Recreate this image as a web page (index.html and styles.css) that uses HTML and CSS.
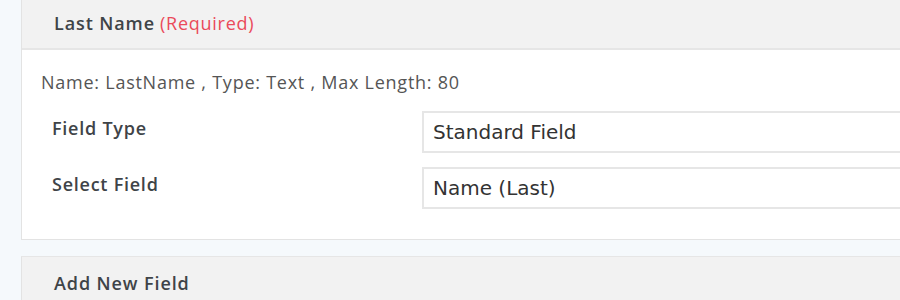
FILE: index.html
```html
<!DOCTYPE html>
<html>
<head>
<meta charset="utf-8">
<link rel="stylesheet" href="styles.css">
</head>
<body>
<div class="page">
  <div class="card">
    <div class="card-header"><span class="title">Last Name</span> <span class="req">(Required)</span></div>
    <div class="card-body">
      <div class="meta">Name: LastName , Type: Text , Max Length: 80</div>
      <div class="row">
        <div class="label">Field Type</div>
        <div class="input">Standard Field</div>
      </div>
      <div class="row">
        <div class="label">Select Field</div>
        <div class="input">Name (Last)</div>
      </div>
    </div>
  </div>
  <div class="card second">
    <div class="card-header"><span class="title">Add New Field</span></div>
  </div>
</div>
</body>
</html>
```
FILE: styles.css
```css
html, body {
  margin: 0;
  padding: 0;
  background: #f5f9fc;
  overflow: hidden;
  width: 900px;
  height: 300px;
}
.page {
  padding-left: 21px;
  font-family: "Open Sans", "Liberation Sans", sans-serif;
  color: #444;
}
.card {
  width: 1000px;
  border-left: 1px solid #e3e3e3;
  border-bottom: 1px solid #e3e3e3;
  background: #fff;
}
.card.second {
  margin-top: 16px;
  border-top: 1px solid #e6e6e6;
  border-bottom: none;
}
.card-header {
  height: 50px;
  background: #f2f2f2;
  border-bottom: 2px solid #e6e6e6;
  padding-left: 32px;
  padding-bottom: 3px;
  box-sizing: border-box;
  display: flex;
  align-items: center;
  font-size: 18px;
  letter-spacing: 0.75px;
}
.second .card-header {
  height: 56px;
  border-bottom: none;
  align-items: flex-start;
  padding-top: 14px;
}
.title {
  font-weight: 600;
  color: #3f4448;
  letter-spacing: 0.9px;
}
.req {
  color: #ea4a5a;
  margin-left: 5px;
}
.card-body {
  padding: 20px 0 30px 19px;
}
.meta {
  font-size: 18px;
  line-height: 24px;
  color: #555;
  letter-spacing: 0.75px;
}
.row {
  display: flex;
  height: 42px;
  margin-top: 14px;
}
.meta + .row {
  margin-top: 17px;
}
.label {
  width: 370px;
  padding-left: 11px;
  font-size: 18px;
  font-weight: 600;
  color: #3f4448;
  line-height: 24px;
  padding-top: 5px;
  letter-spacing: 0.75px;
}
.input {
  flex: 1;
  border: 2px solid #e6e6e6;
  box-sizing: border-box;
  padding-left: 9px;
  display: flex;
  align-items: center;
  font-family: "DejaVu Sans", Verdana, sans-serif;
  font-size: 20px;
  color: #333;
  background: #fff;
}
```
